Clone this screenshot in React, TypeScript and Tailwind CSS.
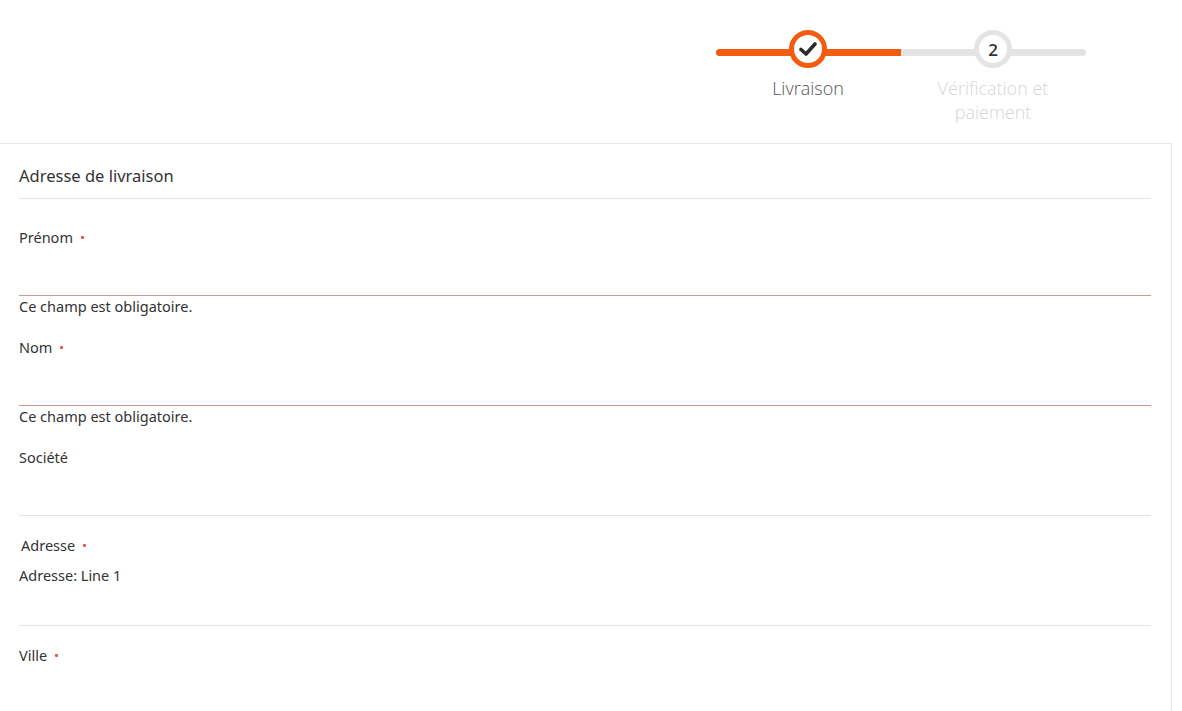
import React from "react";

const Req = () => (
  <span className="ml-[8px] inline-block w-[3px] h-[3px] rounded-[1px] bg-[#e2565a] align-middle relative -top-[2px]" />
);

function Field({
  label,
  required,
  error,
  sub,
  labelIndent,
}: {
  label: string;
  required?: boolean;
  error?: boolean;
  sub?: string;
  labelIndent?: boolean;
}) {
  return (
    <div className="flex flex-col">
      <div className={`h-[20px] leading-[18px] text-[14.5px] text-[#333] ${labelIndent ? "pl-[2px]" : ""}`}>
        {label}
        {required && <Req />}
      </div>
      {sub ? (
        <div className="flex flex-col h-[70px] border-b border-[#e3e3e3]">
          <div className="mt-[10px] h-[20px] leading-[18px] text-[14.5px] text-[#333]">{sub}</div>
        </div>
      ) : (
        <div className={`h-[48px] border-b ${error ? "border-[#d39696]" : "border-[#e3e3e3]"}`} />
      )}
      {error && (
        <div className="h-[21px] leading-[20px] text-[14.5px] text-[#333]">Ce champ est obligatoire.</div>
      )}
    </div>
  );
}

export default function App() {
  return (
    <div
      className="w-[1182px] h-[711px] overflow-hidden bg-white"
      style={{ fontFamily: '"Noto Sans", "Open Sans", sans-serif' }}
    >
      {/* Progress */}
      <div className="h-[143px] relative">
        <div className="absolute left-[716px] top-[49px] w-[370px] h-[7px] rounded-full bg-[#e4e4e4]" />
        <div className="absolute left-[716px] top-[49px] w-[185px] h-[7px] rounded-l-full bg-[#f35c0e]" />
        <div className="absolute left-[738px] top-[30px] w-[140px] flex flex-col items-center">
          <div className="w-[38px] h-[38px] rounded-full border-[5px] border-[#f35c0e] bg-white flex items-center justify-center">
            <svg width="18" height="16" viewBox="0 0 18 16">
              <path d="M2 8.5 L7 13 L16 3" fill="none" stroke="#2b2b2b" strokeWidth="3.6" strokeLinecap="round" strokeLinejoin="round" />
            </svg>
          </div>
          <div
            className="mt-[8px] text-[18px] leading-[24px] font-light text-[#555] text-center"
            style={{ fontFamily: '"Open Sans", sans-serif' }}
          >
            Livraison
          </div>
        </div>
        <div className="absolute left-[923px] top-[30px] w-[140px] flex flex-col items-center">
          <div className="w-[38px] h-[38px] rounded-full border-[5px] border-[#e4e4e4] bg-white flex items-center justify-center">
            <span
              className="text-[17px] font-semibold text-[#333] leading-none"
              style={{ fontFamily: '"Open Sans", sans-serif' }}
            >
              2
            </span>
          </div>
          <div
            className="mt-[8px] text-[18px] leading-[24px] font-light text-[#d6d6d6] text-center whitespace-nowrap"
            style={{ fontFamily: '"Open Sans", sans-serif' }}
          >
            Vérification et
            <br />
            paiement
          </div>
        </div>
      </div>

      {/* Form box */}
      <div className="w-[1172px] border-t border-r border-[#e6e6e6] pl-[19px] pr-[20px]">
        <div className="pt-[21px] pb-[11px] border-b border-[#e3e3e3] text-[16.5px] leading-[22px] text-[#333]">
          Adresse de livraison
        </div>
        <div className="pt-[29px] flex flex-col gap-[21px]">
          <Field label="Prénom" required error />
          <Field label="Nom" required error />
          <div className="flex flex-col gap-[20px]">
            <Field label="Société" />
            <Field label="Adresse" required sub="Adresse: Line 1" labelIndent />
            <Field label="Ville" required />
          </div>
        </div>
      </div>
    </div>
  );
}
